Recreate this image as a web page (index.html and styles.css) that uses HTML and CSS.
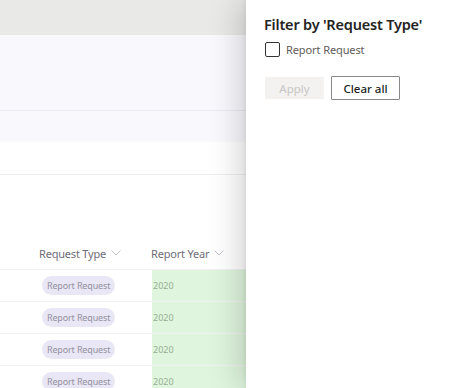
FILE: index.html
```html
<!DOCTYPE html>
<html>
<head>
<meta charset="utf-8">
<link rel="stylesheet" href="styles.css">
</head>
<body>
<div class="page">
  <div class="list">
    <div class="band-top"></div>
    <div class="band-lav1"></div>
    <div class="band-lav2"></div>
    <div class="band-white"></div>
    <div class="spacer"></div>
    <div class="row head">
      <div class="col-type">Request Type <svg class="chev" width="10" height="6" viewBox="0 0 10 6"><path d="M0.5 0.5 L5 5 L9.5 0.5" fill="none" stroke="#c2c0cc" stroke-width="1"/></svg></div>
      <div class="col-year">Report Year <svg class="chev" width="10" height="6" viewBox="0 0 10 6"><path d="M0.5 0.5 L5 5 L9.5 0.5" fill="none" stroke="#c2c0cc" stroke-width="1"/></svg></div>
    </div>
    <div class="row data">
      <div class="col-type"><span class="pill">Report Request</span></div>
      <div class="col-year green">2020</div>
    </div>
    <div class="row data">
      <div class="col-type"><span class="pill">Report Request</span></div>
      <div class="col-year green">2020</div>
    </div>
    <div class="row data">
      <div class="col-type"><span class="pill">Report Request</span></div>
      <div class="col-year green">2020</div>
    </div>
    <div class="row data">
      <div class="col-type"><span class="pill">Report Request</span></div>
      <div class="col-year green">2020</div>
    </div>
  </div>
  <div class="panel">
    <h1 class="title">Filter by 'Request Type'</h1>
    <label class="option"><span class="box"></span><span class="opt-text">Report Request</span></label>
    <div class="buttons">
      <button class="btn apply">Apply</button>
      <button class="btn clear">Clear all</button>
    </div>
  </div>
</div>
</body>
</html>
```

FILE: styles.css
```css
* { box-sizing: border-box; }
html, body { margin: 0; padding: 0; }
body {
  width: 474px;
  height: 388px;
  overflow: hidden;
  background: #fff;
  font-family: "Noto Sans", "Open Sans", sans-serif;
}
.page {
  display: flex;
  height: 388px;
}
.list {
  width: 246px;
  flex: none;
  display: flex;
  flex-direction: column;
  overflow: hidden;
}
.band-top {
  height: 35px;
  background: #e9e9e8;
  flex: none;
}
.band-lav1 {
  height: 76px;
  background: #f9f8fc;
  border-bottom: 1px solid #ebe9f1;
  flex: none;
}
.band-lav2 {
  height: 31px;
  background: #f9f8fc;
  flex: none;
}
.band-white {
  height: 33px;
  border-bottom: 1px solid #efeff1;
  flex: none;
}
.spacer {
  height: 62px;
  flex: none;
}
.row {
  display: flex;
  flex: none;
  height: 32px;
}
.row.head {
  height: 33px;
  align-items: center;
  border-bottom: 1px solid #f1f0f3;
  font-size: 11px;
  letter-spacing: -0.2px;
  color: #6f6d7a;
}
.row.data {
  border-bottom: 1px solid #f1f0f3;
}
.col-type {
  width: 152px;
  padding-left: 39px;
  display: flex;
  align-items: center;
  gap: 4px;
}
.row.data .col-type { padding-left: 42px; }
.col-year {
  flex: 1;
  display: flex;
  align-items: center;
  gap: 4px;
}
.row.head .col-year { margin-left: -1px; }
.chev { margin-left: 1px; }
.pill {
  display: inline-block;
  height: 19px;
  line-height: 19px;
  padding: 0 5px;
  border-radius: 10px;
  background: #e9e7f5;
  color: #9391a0;
  font-size: 9px;
  letter-spacing: -0.15px;
  white-space: nowrap;
}
.green {
  background: #dff5dd;
  color: #95ae92;
  font-size: 9px;
  padding-left: 1px;
}
.panel {
  flex: 1;
  background: #fff;
  box-shadow: -6px 0 30px rgba(0, 0, 0, 0.18), -1px 0 4px rgba(0, 0, 0, 0.06);
  padding: 14px 0 0 18px;
  position: relative;
  z-index: 1;
}
.title {
  margin: 0;
  font-size: 14.5px;
  font-weight: 600;
  letter-spacing: -0.2px;
  color: #252423;
  line-height: 20px;
}
.option {
  display: flex;
  align-items: center;
  gap: 6px;
  margin-top: 8px;
  margin-left: 1px;
}
.box {
  width: 15px;
  height: 15px;
  border: 1px solid #333;
  border-radius: 2px;
  background: #fff;
}
.opt-text {
  font-size: 11px;
  letter-spacing: -0.1px;
  color: #5f5d5b;
}
.buttons {
  display: flex;
  align-items: center;
  gap: 7px;
  margin-top: 19px;
  margin-left: 1px;
}
.btn {
  font-family: inherit;
  font-size: 11.5px;
  height: 24px;
  border-radius: 1px;
  padding: 0;
}
.apply {
  width: 59px;
  height: 22px;
  background: #f3f2f1;
  border: none;
  color: #c8c6c4;
}
.clear {
  width: 69px;
  background: #fff;
  border: 1px solid #8a8886;
  color: #201f1e;
  font-weight: 500;
}
```
